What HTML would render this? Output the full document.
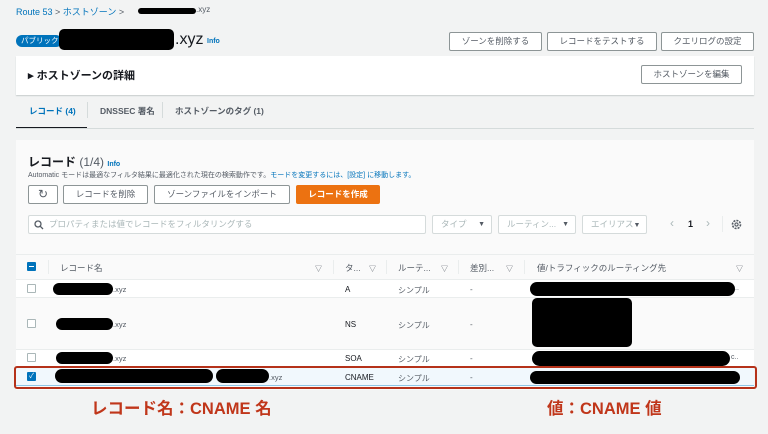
<!DOCTYPE html>
<html><head><meta charset="utf-8"><style>
*{margin:0;padding:0;box-sizing:border-box}
body{width:768px;height:434px;background:#f2f3f3;font-family:"Liberation Sans","Noto Sans CJK JP",sans-serif;color:#16191f;position:relative;overflow:hidden;font-size:9px}
.a{position:absolute}
.btn{position:absolute;height:19px;border:1px solid #8d9596;background:#fff;border-radius:2px;font-size:8.5px;color:#545b64;text-align:center;line-height:17px;white-space:nowrap}
.blk{position:absolute;background:#000;border-radius:8px}
.g{color:#545b64}
.sel{position:absolute;height:19px;border:1px solid #d5dbdb;background:#fff;font-size:8.5px;color:#aab7b8;line-height:17px;padding-left:8px;border-radius:2px}
.tri{position:absolute;font-size:7px;color:#545b64}
.cb{position:absolute;left:27px;width:9px;height:9px;border:1px solid #aab7b8;background:#fff;border-radius:1px}
.row{position:absolute;left:16px;width:738px;border-bottom:1px solid #eaeded}
.ann{position:absolute;color:#c0361a;font-weight:bold;font-size:16.5px}
</style></head><body>
<div class="a" style="left:16px;top:5px;font-size:9px;color:#0073bb">Route 53 <span style="color:#545b64">&gt;</span> ホストゾーン <span style="color:#545b64">&gt;</span></div>
<div class="blk" style="left:138px;top:8px;width:58px;height:6px"></div>
<div class="a" style="left:196px;top:5px;font-size:8px;color:#545b64">.xyz</div>

<div class="a" style="left:16px;top:35px;width:46px;height:12px;background:#0073bb;border-radius:6px;color:#fff;font-size:7.5px;line-height:12px;padding-left:5px">パブリック</div>
<div class="blk" style="left:59px;top:29px;width:115px;height:21px;border-radius:5px"></div>
<div class="a" style="left:175px;top:31px;font-size:16px;color:#16191f">.xyz</div>
<div class="a" style="left:207px;top:38px;font-size:7px;color:#0073bb;font-weight:bold">Info</div>

<div class="btn" style="left:449px;top:32px;width:93px">ゾーンを削除する</div>
<div class="btn" style="left:547px;top:32px;width:110px">レコードをテストする</div>
<div class="btn" style="left:661px;top:32px;width:93px">クエリログの設定</div>

<div class="a" style="left:16px;top:56px;width:738px;height:39px;background:#fff;box-shadow:0 1px 1px #c8cccc"></div>
<div class="a" style="left:28px;top:67px;font-size:11px;font-weight:bold">▸ ホストゾーンの詳細</div>
<div class="btn" style="left:641px;top:65px;width:101px">ホストゾーンを編集</div>

<div class="a" style="left:29px;top:105px;font-size:8.5px;color:#0073bb;font-weight:bold">レコード (4)</div>
<div class="a" style="left:87px;top:102px;width:1px;height:16px;background:#d5dbdb"></div>
<div class="a" style="left:100px;top:105px;font-size:8.5px;color:#545b64;font-weight:bold">DNSSEC 署名</div>
<div class="a" style="left:162px;top:102px;width:1px;height:16px;background:#d5dbdb"></div>
<div class="a" style="left:175px;top:105px;font-size:8.5px;color:#545b64;font-weight:bold">ホストゾーンのタグ (1)</div>
<div class="a" style="left:16px;top:127px;width:71px;height:2px;background:#16191f"></div>
<div class="a" style="left:16px;top:128px;width:738px;height:1px;background:#d5dbdb"></div>

<div class="a" style="left:16px;top:140px;width:738px;height:250px;background:#fafafa"></div>
<div class="a" style="left:28px;top:153px;font-size:12px;font-weight:bold">レコード <span style="font-weight:normal;color:#545b64">(1/4)</span> <span style="font-size:7px;color:#0073bb">Info</span></div>
<div class="a" style="left:28px;top:170px;font-size:7px;color:#545b64;white-space:nowrap">Automatic モードは最適なフィルタ結果に最適化された現在の検索動作です。<span style="color:#0073bb">モードを変更するには、[設定] に移動します。</span></div>
<div class="btn" style="left:28px;top:185px;width:30px;font-size:12px;line-height:16px">↻</div>
<div class="btn" style="left:63px;top:185px;width:85px">レコードを削除</div>
<div class="btn" style="left:154px;top:185px;width:136px">ゾーンファイルをインポート</div>
<div class="btn" style="left:296px;top:185px;width:84px;background:#ec7211;border-color:#ec7211;color:#fff;font-weight:bold">レコードを作成</div>

<div class="sel" style="left:28px;top:215px;width:398px;color:#aab7b8;padding-left:20px">プロパティまたは値でレコードをフィルタリングする</div>
<svg class="a" style="left:34px;top:220px" width="10" height="10"><circle cx="4" cy="4" r="3" fill="none" stroke="#545b64" stroke-width="1.3"/><line x1="6.3" y1="6.3" x2="9" y2="9" stroke="#545b64" stroke-width="1.3"/></svg>
<div class="sel" style="left:432px;top:215px;width:60px">タイプ<span style="position:absolute;right:6px;color:#545b64;font-size:7px">▼</span></div>
<div class="sel" style="left:498px;top:215px;width:78px">ルーティン...<span style="position:absolute;right:6px;color:#545b64;font-size:7px">▼</span></div>
<div class="sel" style="left:582px;top:215px;width:65px">エイリアス<span style="color:#545b64;font-size:7px">▼</span></div>
<div class="a" style="left:670px;top:216px;font-size:12px;color:#aab7b8">‹</div>
<div class="a" style="left:688px;top:219px;font-size:9px;font-weight:bold">1</div>
<div class="a" style="left:706px;top:216px;font-size:12px;color:#aab7b8">›</div>
<div class="a" style="left:722px;top:216px;width:1px;height:16px;background:#eaeded"></div>
<svg class="a" style="left:731px;top:219px" width="11" height="11"><circle cx="5.5" cy="5.5" r="4" fill="none" stroke="#545b64" stroke-width="1.6" stroke-dasharray="2 1.1"/><circle cx="5.5" cy="5.5" r="1.6" fill="none" stroke="#545b64" stroke-width="1.1"/></svg>

<div class="row" style="top:254px;height:26px;border-top:1px solid #eaeded;background:#fafafa"></div>
<div class="a" style="left:27px;top:262px;width:9px;height:9px;background:#0073bb;border-radius:1px"><div style="margin:4px 2px;height:1px;background:#fff"></div></div>
<div class="a" style="left:48px;top:260px;width:1px;height:14px;background:#eaeded"></div>
<div class="a g" style="left:60px;top:262px;font-size:8.5px">レコード名</div>
<div class="tri" style="left:315px;top:264px">▽</div>
<div class="a" style="left:333px;top:260px;width:1px;height:14px;background:#eaeded"></div>
<div class="a g" style="left:345px;top:262px;font-size:8.5px">タ...</div><div class="tri" style="left:369px;top:264px">▽</div>
<div class="a" style="left:386px;top:260px;width:1px;height:14px;background:#eaeded"></div>
<div class="a g" style="left:398px;top:262px;font-size:8.5px">ルーテ...</div><div class="tri" style="left:441px;top:264px">▽</div>
<div class="a" style="left:458px;top:260px;width:1px;height:14px;background:#eaeded"></div>
<div class="a g" style="left:470px;top:262px;font-size:8.5px">差別...</div><div class="tri" style="left:506px;top:264px">▽</div>
<div class="a" style="left:524px;top:260px;width:1px;height:14px;background:#eaeded"></div>
<div class="a g" style="left:537px;top:262px;font-size:8.5px">値/トラフィックのルーティング先</div><div class="tri" style="left:736px;top:264px">▽</div>

<div class="row" style="top:280px;height:18px;background:#fff"></div>
<div class="cb" style="top:284px"></div>
<div class="blk" style="left:53px;top:283px;width:60px;height:12px"></div><div class="a g" style="left:113px;top:285px;font-size:7.5px">.xyz</div>
<div class="a" style="left:345px;top:285px;font-size:8px">A</div>
<div class="a g" style="left:398px;top:285px;font-size:8px">シンプル</div>
<div class="a g" style="left:470px;top:285px;font-size:8px">-</div>
<div class="blk" style="left:530px;top:282px;width:205px;height:14px"></div><div class="a g" style="left:735px;top:285px;font-size:7px">..</div>

<div class="row" style="top:298px;height:52px;background:#fafafa"></div>
<div class="cb" style="top:319px"></div>
<div class="blk" style="left:56px;top:318px;width:57px;height:12px"></div><div class="a g" style="left:113px;top:320px;font-size:7.5px">.xyz</div>
<div class="a" style="left:345px;top:320px;font-size:8px">NS</div>
<div class="a g" style="left:398px;top:320px;font-size:8px">シンプル</div>
<div class="a g" style="left:470px;top:320px;font-size:8px">-</div>
<div class="blk" style="left:532px;top:298px;width:100px;height:49px;border-radius:5px"></div>

<div class="row" style="top:350px;height:18px;background:#fff"></div>
<div class="cb" style="top:353px"></div>
<div class="blk" style="left:56px;top:352px;width:57px;height:12px"></div><div class="a g" style="left:113px;top:354px;font-size:7.5px">.xyz</div>
<div class="a" style="left:345px;top:354px;font-size:8px">SOA</div>
<div class="a g" style="left:398px;top:354px;font-size:8px">シンプル</div>
<div class="a g" style="left:470px;top:354px;font-size:8px">-</div>
<div class="blk" style="left:532px;top:351px;width:198px;height:15px"></div><div class="a g" style="left:731px;top:354px;font-size:7px">c..</div>

<div class="row" style="top:368px;height:18px;background:#f1f8fd;border-bottom:1px solid #8ec6e6"></div>
<div class="a" style="left:27px;top:372px;width:9px;height:9px;background:#0073bb;border-radius:1px;color:#fff;font-size:7px;line-height:9px;text-align:center">✓</div>
<div class="blk" style="left:55px;top:369px;width:158px;height:14px"></div>
<div class="blk" style="left:216px;top:369px;width:53px;height:14px"></div><div class="a g" style="left:269px;top:373px;font-size:7.5px">.xyz</div>
<div class="a" style="left:345px;top:373px;font-size:8px">CNAME</div>
<div class="a g" style="left:398px;top:373px;font-size:8px">シンプル</div>
<div class="a g" style="left:470px;top:373px;font-size:8px">-</div>
<div class="blk" style="left:530px;top:371px;width:210px;height:13px"></div>

<div class="a" style="left:14px;top:366px;width:743px;height:23px;border:2.5px solid #b5321a;border-radius:3px"></div>
<div class="ann" style="left:91px;top:395px">レコード名：CNAME 名</div>
<div class="ann" style="left:547px;top:395px">値：CNAME 値</div>
</body></html>
